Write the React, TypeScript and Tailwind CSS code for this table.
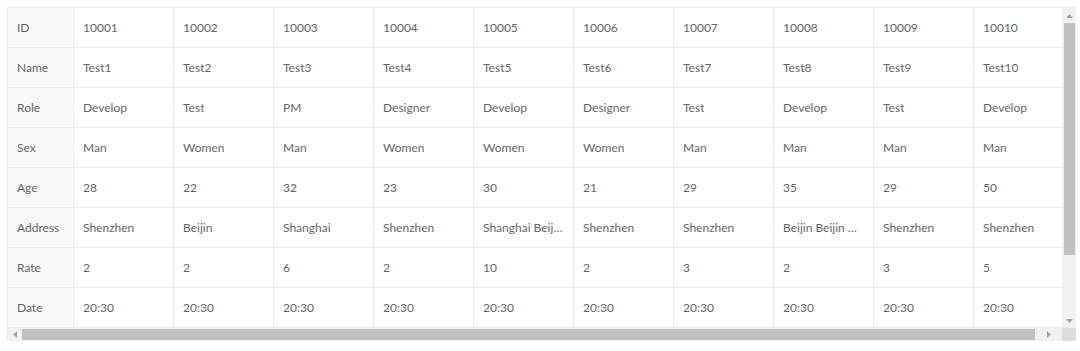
const rows: [string, string[]][] = [
  ["ID", ["10001", "10002", "10003", "10004", "10005", "10006", "10007", "10008", "10009", "10010"]],
  ["Name", ["Test1", "Test2", "Test3", "Test4", "Test5", "Test6", "Test7", "Test8", "Test9", "Test10"]],
  ["Role", ["Develop", "Test", "PM", "Designer", "Develop", "Designer", "Test", "Develop", "Test", "Develop"]],
  ["Sex", ["Man", "Women", "Man", "Women", "Women", "Women", "Man", "Man", "Man", "Man"]],
  ["Age", ["28", "22", "32", "23", "30", "21", "29", "35", "29", "50"]],
  [
    "Address",
    [
      "Shenzhen",
      "Beijin",
      "Shanghai",
      "Shenzhen",
      "Shanghai Beijin Shenzhen",
      "Shenzhen",
      "Shenzhen",
      "Beijin Beijin Beijin",
      "Shenzhen",
      "Shenzhen",
    ],
  ],
  ["Rate", ["2", "2", "6", "2", "10", "2", "3", "2", "3", "5"]],
  ["Date", ["20:30", "20:30", "20:30", "20:30", "20:30", "20:30", "20:30", "20:30", "20:30", "20:30"]],
];

function Arrow({ dir }: { dir: "up" | "down" | "left" | "right" }) {
  const pts = {
    up: "0,4 3.5,0 7,4",
    down: "0,0 3.5,4 7,0",
    left: "4,0 0,3.5 4,7",
    right: "0,0 4,3.5 0,7",
  }[dir];
  const horiz = dir === "left" || dir === "right";
  return (
    <svg width={horiz ? 4 : 7} height={horiz ? 7 : 4} viewBox={horiz ? "0 0 4 7" : "0 0 7 4"}>
      <polygon points={pts} fill="#a3a3a3" />
    </svg>
  );
}

export default function App() {
  return (
    <div
      className="pt-[7px] pl-[7px] bg-white text-[12px] text-[#63666b]"
      style={{ fontFamily: 'Lato, "Noto Sans", sans-serif' }}
    >
      <div className="w-[1069px] border border-[#e8eaec] border-r-0 border-b-0">
        <div className="flex">
          {/* table viewport */}
          <div className="w-[1054px] h-[320px] overflow-hidden">
            {rows.map(([label, cells]) => (
              <div key={label} className="flex h-[40px] border-b border-[#e8eaec] w-max">
                <div className="w-[66px] shrink-0 bg-[#f8f8f9] border-r border-[#e8eaec] px-[9px] pt-[1px] flex items-center">
                  {label}
                </div>
                {cells.map((c, i) => (
                  <div
                    key={i}
                    className="w-[100px] shrink-0 border-r border-[#e8eaec] px-[9px] pt-[1px] flex items-center overflow-hidden"
                  >
                    <span className="truncate">{c}</span>
                  </div>
                ))}
              </div>
            ))}
          </div>
          {/* vertical scrollbar */}
          <div className="w-[14px] h-[320px] bg-[#f1f1f1] flex flex-col items-center">
            <div className="h-[15px] flex items-center justify-center">
              <Arrow dir="up" />
            </div>
            <div className="w-[11px] h-[232px] bg-[#c1c1c1]" />
            <div className="flex-1" />
            <div className="h-[15px] flex items-center justify-center">
              <Arrow dir="down" />
            </div>
          </div>
        </div>
        {/* horizontal scrollbar */}
        <div className="flex h-[13px]">
          <div className="w-[1054px] bg-[#f1f1f1] flex items-center">
            <div className="w-[14px] flex justify-center">
              <Arrow dir="left" />
            </div>
            <div className="w-[1013px] h-[11px] bg-[#c1c1c1]" />
            <div className="flex-1 flex justify-center">
              <Arrow dir="right" />
            </div>
          </div>
          <div className="w-[14px] bg-[#dcdcdc]" />
        </div>
      </div>
    </div>
  );
}
